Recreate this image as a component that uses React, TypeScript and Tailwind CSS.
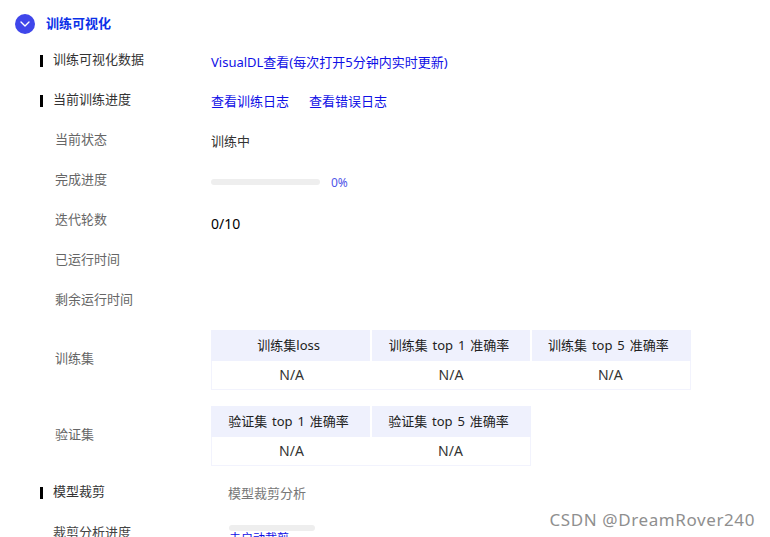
import React from 'react';
import { ChevronDown } from 'lucide-react';

const font = "font-['Noto_Sans','Noto_Sans_CJK_SC',sans-serif]";

const Row: React.FC<{ label: string; mark?: boolean; valueClass?: string; children?: React.ReactNode }> = ({
  label,
  mark,
  valueClass = 'mt-1',
  children,
}) => (
  <div className="flex h-10 items-center">
    {mark ? (
      <div className="flex w-[211px] items-center pl-[40px] text-[13px] text-[#333]">
        <span className="mr-[10px] h-3 w-[3px] translate-y-[1px] bg-black" />
        {label}
      </div>
    ) : (
      <div className="w-[211px] pl-[55px] text-[13px] text-[#666]">{label}</div>
    )}
    <div className={`flex items-center text-[13px] ${valueClass}`}>{children}</div>
  </div>
);

const MetricTable: React.FC<{ heads: string[] }> = ({ heads }) => (
  <div className="flex border-r border-b border-l border-[#f2f3fd]" style={{ width: heads.length * 160 }}>
    {heads.map((h, i) => (
      <div key={h} className="w-40">
        <div className={`-mx-px flex h-[31px] items-center justify-center bg-[#eff1fd] pr-[6px] text-[13px] text-[#222] [word-spacing:1.5px] ${i > 0 ? 'border-l-2 border-white' : ''}`}>
          {h}
        </div>
        <div className="flex h-[28px] items-center justify-center pb-[2px] text-[14px] text-[#333]">N/A</div>
      </div>
    ))}
  </div>
);

export default function App() {
  return (
    <div className={`relative h-[537px] w-[770px] overflow-hidden bg-white ${font}`}>
      <div className="flex h-10 items-center pt-2 pl-[15px]">
        <div className="flex h-5 w-5 items-center justify-center rounded-full bg-[#3f46ea]">
          <ChevronDown size={16} strokeWidth={2} className="text-white" />
        </div>
        <span className="ml-[11px] text-[13px] font-bold text-[#0b31e8]">训练可视化</span>
      </div>

      <Row label="训练可视化数据" mark valueClass="mt-[5px]">
        <a className="text-[#1010e6]">VisualDL查看(每次打开5分钟内实时更新)</a>
      </Row>
      <Row label="当前训练进度" mark>
        <a className="text-[#1010e6]">查看训练日志</a>
        <a className="ml-5 text-[#1010e6]">查看错误日志</a>
      </Row>
      <Row label="当前状态">
        <span className="text-[#333]">训练中</span>
      </Row>
      <Row label="完成进度" valueClass="mt-[3px]">
        <div className="h-[6px] w-[109px] rounded-full bg-[#eeeeee]" />
        <span className="ml-[11px] mt-[3px] text-[12px] text-[#4f55e8]">0%</span>
      </Row>
      <Row label="迭代轮数">
        <span className="mt-[2px] text-[14px] text-black">0/10</span>
      </Row>
      <Row label="已运行时间" />
      <Row label="剩余运行时间" />

      <div className="mt-[10px] flex items-center">
        <div className="w-[211px] pb-[3px] pl-[55px] text-[13px] text-[#666]">训练集</div>
        <MetricTable heads={['训练集loss', '训练集 top 1 准确率', '训练集 top 5 准确率']} />
      </div>
      <div className="mt-4 flex items-center">
        <div className="w-[211px] pb-[3px] pl-[55px] text-[13px] text-[#666]">验证集</div>
        <MetricTable heads={['验证集 top 1 准确率', '验证集 top 5 准确率']} />
      </div>

      <div className="mt-[6px]">
        <Row label="模型裁剪" mark>
          <span className="ml-[17px] text-[#777]">模型裁剪分析</span>
        </Row>
        <div className="flex h-10 items-start pt-[11px]">
          <div className="w-[211px] pl-[53px] text-[13px] text-[#444]">裁剪分析进度</div>
          <div className="ml-[18px] w-[86px]">
            <div className="mt-[2px] h-[6px] rounded-full bg-[#eeeeee]" />
            <div className="text-[12px] leading-[15px] text-[#1010e6]">未启动裁剪</div>
          </div>
        </div>
      </div>

      <div className="absolute bottom-[5px] right-[15px] text-[17px] tracking-[0.6px] text-[#8f8f8f]">CSDN @DreamRover240</div>
    </div>
  );
}
